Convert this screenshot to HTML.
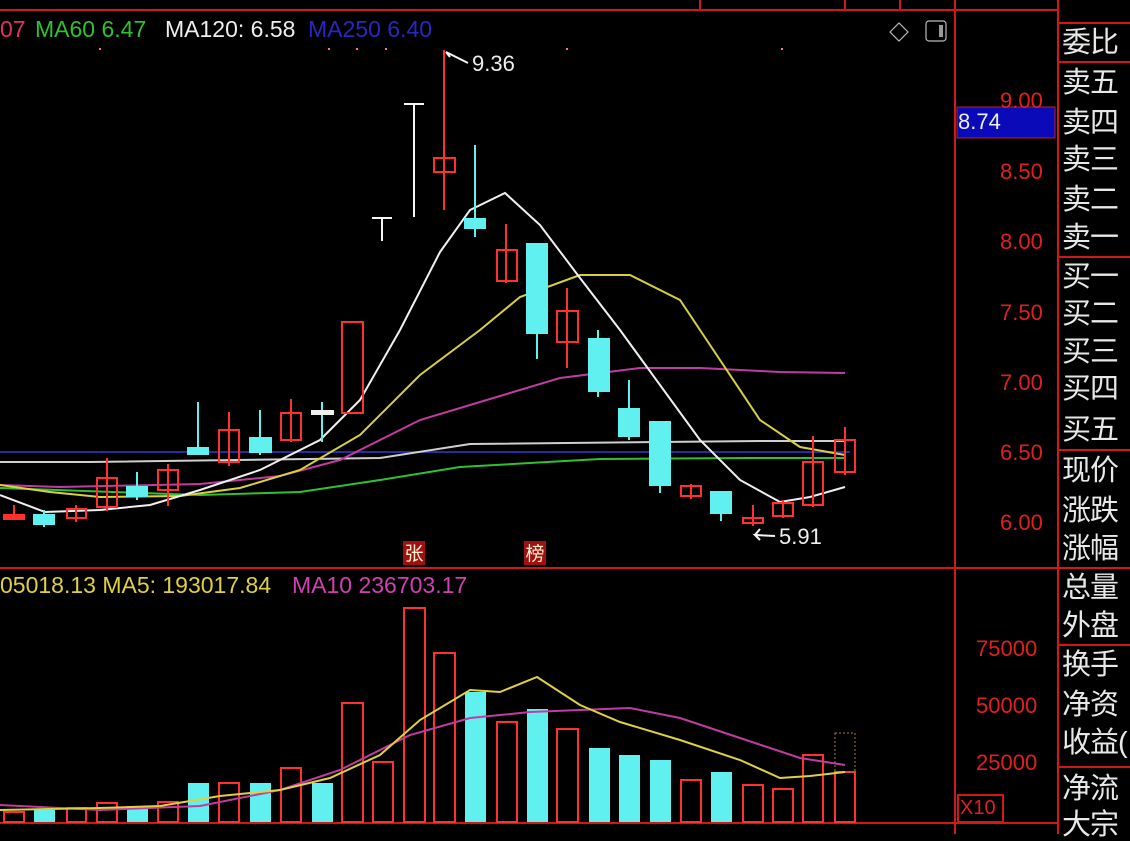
<!DOCTYPE html>
<html><head><meta charset="utf-8"><style>
html,body{margin:0;padding:0;background:#000;width:1130px;height:834px;overflow:hidden}
.t{position:absolute;font-family:"Liberation Sans",sans-serif;white-space:nowrap}
.r{position:absolute;left:1062px;font-family:"Liberation Sans","Noto Sans CJK SC",sans-serif;font-size:29px;color:#e8e8e8;line-height:30px;letter-spacing:-1px}
</style></head><body>
<svg width="1130" height="834" style="position:absolute;left:0;top:0" xmlns="http://www.w3.org/2000/svg">
<g stroke="#d01818" stroke-width="2" fill="none">
<line x1="0" y1="10" x2="1058" y2="10"/>
<line x1="955" y1="0" x2="955" y2="834"/>
<line x1="1058" y1="0" x2="1058" y2="834"/>
<line x1="0" y1="568" x2="1058" y2="568"/>
<line x1="0" y1="823" x2="1058" y2="823"/>
<line x1="1058" y1="23" x2="1130" y2="23"/>
<line x1="1058" y1="62" x2="1130" y2="62"/>
<line x1="1058" y1="257" x2="1130" y2="257"/>
<line x1="1058" y1="450" x2="1130" y2="450"/>
<line x1="1058" y1="568" x2="1130" y2="568"/>
<line x1="1058" y1="645" x2="1130" y2="645"/>
<line x1="1058" y1="767" x2="1130" y2="767"/>
<line x1="845" y1="0" x2="845" y2="10"/><line x1="700" y1="0" x2="700" y2="10"/><line x1="900" y1="0" x2="900" y2="10"/>
<rect x="958" y="795" width="45" height="27"/>
</g>
<rect x="957" y="107" width="98" height="31" fill="#0a0ab8" stroke="#c02020"/>
<polyline fill="none" stroke="#2a2aa0" stroke-width="2" points="0,452 560,452 850,452"/>
<polyline fill="none" stroke="#cfcfcf" stroke-width="2" points="0,462 90,462 380,458 470,444 760,441 845,441"/>
<polyline fill="none" stroke="#30c030" stroke-width="2" points="0,488 200,495 300,492 380,480 460,467 600,459 750,458 845,458"/>
<polyline fill="none" stroke="#c03ca0" stroke-width="2" points="0,485 60,487 200,484 280,476 340,460 420,420 500,396 560,378 640,368 700,368 780,372 845,373"/>
<polyline fill="none" stroke="#d8d040" stroke-width="2" points="0,485 50,492 100,497 180,496 240,488 300,470 360,435 420,375 480,330 520,297 580,275 630,275 680,300 720,360 760,420 800,447 845,455"/>
<polyline fill="none" stroke="#f0f0f0" stroke-width="2" points="0,495 45,512 100,510 150,505 200,490 260,470 320,440 360,400 400,330 440,252 470,210 505,193 540,225 580,278 620,330 660,385 700,440 740,480 780,502 810,497 845,487"/>
<g stroke-width="2">
<g stroke="#ff3030" fill="none">
<line x1="14" y1="505" x2="14" y2="518"/><rect x="4" y="515" width="20" height="4" fill="#ff3030"/>
<line x1="76" y1="505" x2="76" y2="522"/><rect x="67" y="509" width="19" height="9"/>
<line x1="107" y1="458" x2="107" y2="511"/><rect x="97" y="478" width="20" height="29"/>
<line x1="168" y1="464" x2="168" y2="506"/><rect x="158" y="470" width="20" height="20"/>
<line x1="229" y1="412" x2="229" y2="466"/><rect x="219" y="430" width="20" height="32"/>
<line x1="291" y1="399" x2="291" y2="442"/><rect x="281" y="413" width="20" height="27"/>
<rect x="342" y="322" width="21" height="91"/>
<line x1="444" y1="50" x2="444" y2="210"/><rect x="434" y="158" width="21" height="14"/>
<line x1="506" y1="224" x2="506" y2="283"/><rect x="497" y="250" width="20" height="31"/>
<line x1="567" y1="288" x2="567" y2="368"/><rect x="557" y="311" width="21" height="31"/>
<line x1="691" y1="484" x2="691" y2="499"/><rect x="681" y="486" width="20" height="10"/>
<line x1="753" y1="505" x2="753" y2="526"/><rect x="743" y="518" width="20" height="5"/>
<line x1="783" y1="500" x2="783" y2="518"/><rect x="773" y="503" width="20" height="13"/>
<line x1="813" y1="436" x2="813" y2="507"/><rect x="803" y="462" width="20" height="43"/>
<line x1="845" y1="427" x2="845" y2="475"/><rect x="835" y="440" width="20" height="32"/>
</g>
<g stroke="#60f0f0" fill="#60f0f0">
<line x1="44" y1="510" x2="44" y2="527"/><rect x="34" y="515" width="20" height="9"/>
<line x1="137" y1="472" x2="137" y2="500"/><rect x="127" y="487" width="20" height="9"/>
<line x1="198" y1="402" x2="198" y2="455"/><rect x="188" y="448" width="20" height="6"/>
<line x1="260" y1="410" x2="260" y2="455"/><rect x="250" y="438" width="21" height="14"/>
<line x1="322" y1="402" x2="322" y2="442"/><rect x="312" y="411" width="21" height="3" stroke="#f0f0f0" fill="#f0f0f0"/>
<line x1="475" y1="145" x2="475" y2="237"/><rect x="465" y="219" width="20" height="9"/>
<line x1="537" y1="244" x2="537" y2="359"/><rect x="527" y="244" width="20" height="89"/>
<line x1="598" y1="330" x2="598" y2="397"/><rect x="589" y="339" width="20" height="52"/>
<line x1="629" y1="380" x2="629" y2="440"/><rect x="619" y="409" width="20" height="27"/>
<line x1="660" y1="422" x2="660" y2="493"/><rect x="650" y="422" width="20" height="63"/>
<line x1="721" y1="492" x2="721" y2="521"/><rect x="711" y="492" width="20" height="21"/>
</g>
<g stroke="#f5f5f5" fill="none">
<line x1="372" y1="218" x2="392" y2="218"/><line x1="382" y1="218" x2="382" y2="241"/>
<line x1="404" y1="104" x2="424" y2="104"/><line x1="414" y1="104" x2="414" y2="217"/>
<polyline points="450,57 446,52 452,55 468,63"/>
<polyline points="760,529 755,535 760,540 755,535 775,536"/>
<path d="M890 32 L899 23 L908 32 L899 41 Z" stroke="#bbb" stroke-width="1.2"/>
<rect x="926" y="21" width="20" height="20" rx="3" stroke="#bbb" stroke-width="1.2"/>
<rect x="939" y="25" width="4" height="12" fill="#999" stroke="none"/>
</g>
</g>
<g fill="#ff70a0"><rect x="99" y="48" width="2" height="2"/><rect x="328" y="48" width="2" height="2"/><rect x="356" y="48" width="2" height="2"/><rect x="385" y="48" width="2" height="2"/><rect x="566" y="48" width="2" height="2"/><rect x="781" y="48" width="2" height="2"/></g>
<g stroke-width="2">
<g stroke="#ff3030" fill="none">
<rect x="4" y="812" width="20" height="10"/><rect x="67" y="808" width="19" height="14"/><rect x="97" y="803" width="20" height="19"/><rect x="158" y="802" width="20" height="20"/><rect x="219" y="783" width="20" height="39"/><rect x="281" y="768" width="20" height="54"/><rect x="342" y="703" width="21" height="119"/><rect x="373" y="762" width="20" height="60"/><rect x="404" y="608" width="21" height="214"/><rect x="434" y="653" width="21" height="169"/><rect x="497" y="722" width="20" height="100"/><rect x="557" y="729" width="21" height="93"/><rect x="681" y="780" width="20" height="42"/><rect x="743" y="785" width="20" height="37"/><rect x="773" y="789" width="20" height="33"/><rect x="803" y="755" width="20" height="67"/><rect x="835" y="772" width="20" height="50"/>
</g>
<rect x="835" y="733" width="20" height="39" fill="none" stroke="#a08040" stroke-width="1" stroke-dasharray="2,2"/>
<g fill="#60f0f0" stroke="none">
<rect x="34" y="810" width="21" height="12"/><rect x="127" y="806" width="21" height="16"/><rect x="188" y="783" width="21" height="39"/><rect x="250" y="783" width="21" height="39"/><rect x="312" y="783" width="21" height="39"/><rect x="465" y="692" width="21" height="130"/><rect x="527" y="709" width="21" height="113"/><rect x="589" y="748" width="21" height="74"/><rect x="619" y="755" width="21" height="67"/><rect x="650" y="760" width="21" height="62"/><rect x="711" y="772" width="21" height="50"/>
</g>
<polyline fill="none" stroke="#c03ca0" points="0,805 100,810 200,806 280,790 340,770 410,735 470,718 530,712 580,710 630,708 680,718 740,738 800,758 845,765"/>
<polyline fill="none" stroke="#e0d040" points="0,810 100,808 160,806 220,796 280,790 330,778 380,755 420,720 470,690 500,692 537,677 580,705 620,722 680,740 740,760 780,778 810,776 845,772"/>
</g>
</svg>
<div class="t" style="left:0;top:16px;font-size:23px;color:#e03060">07</div>
<div class="t" style="left:35px;top:16px;font-size:23px;color:#30c030">MA60&nbsp;6.47</div>
<div class="t" style="left:165px;top:16px;font-size:23px;color:#eee">MA120: 6.58</div>
<div class="t" style="left:308px;top:16px;font-size:23px;color:#2828c0">MA250&nbsp;6.40</div>
<div class="t" style="left:472px;top:51px;font-size:22px;color:#eee">9.36</div>
<div class="t" style="left:779px;top:524px;font-size:22px;color:#eee">5.91</div>
<div class="t" style="left:0;top:572px;font-size:23px;color:#e0d040">05018.13 MA5: 193017.84</div>
<div class="t" style="left:292px;top:572px;font-size:23px;color:#d040b0">MA10&nbsp;236703.17</div>
<div class="t" style="left:958px;top:109px;font-size:22px;color:#eee">8.74</div>
<div class="t" style="left:1000px;top:88px;font-size:22px;color:#e02020">9.00</div>
<div class="t" style="left:1000px;top:159px;font-size:22px;color:#e02020">8.50</div>
<div class="t" style="left:1000px;top:229px;font-size:22px;color:#e02020">8.00</div>
<div class="t" style="left:1000px;top:300px;font-size:22px;color:#e02020">7.50</div>
<div class="t" style="left:1000px;top:370px;font-size:22px;color:#e02020">7.00</div>
<div class="t" style="left:1000px;top:440px;font-size:22px;color:#e02020">6.50</div>
<div class="t" style="left:1000px;top:510px;font-size:22px;color:#e02020">6.00</div>
<div class="t" style="left:976px;top:636px;font-size:22px;color:#e02020">75000</div>
<div class="t" style="left:976px;top:693px;font-size:22px;color:#e02020">50000</div>
<div class="t" style="left:976px;top:750px;font-size:22px;color:#e02020">25000</div>
<div class="t" style="left:960px;top:797px;font-size:20px;color:#e02020">X10</div>
<div class="t" style="left:403px;top:541px;width:22px;height:24px;background:#a01010;color:#fff0d0;font-family:'Noto Sans CJK SC',sans-serif;font-size:19px;text-align:center;line-height:24px">张</div>
<div class="t" style="left:524px;top:541px;width:22px;height:24px;background:#a01010;color:#fff0d0;font-family:'Noto Sans CJK SC',sans-serif;font-size:19px;text-align:center;line-height:24px">榜</div>
<div class="r" style="top:28px">委比</div>
<div class="r" style="top:68px">卖五</div>
<div class="r" style="top:108px">卖四</div>
<div class="r" style="top:145px">卖三</div>
<div class="r" style="top:185px">卖二</div>
<div class="r" style="top:223px">卖一</div>
<div class="r" style="top:262px">买一</div>
<div class="r" style="top:299px">买二</div>
<div class="r" style="top:337px">买三</div>
<div class="r" style="top:374px">买四</div>
<div class="r" style="top:415px">买五</div>
<div class="r" style="top:456px">现价</div>
<div class="r" style="top:496px">涨跌</div>
<div class="r" style="top:534px">涨幅</div>
<div class="r" style="top:573px">总量</div>
<div class="r" style="top:611px">外盘</div>
<div class="r" style="top:650px">换手</div>
<div class="r" style="top:690px">净资</div>
<div class="r" style="top:728px">收益(</div>
<div class="r" style="top:774px">净流</div>
<div class="r" style="top:810px">大宗</div>
</body></html>
